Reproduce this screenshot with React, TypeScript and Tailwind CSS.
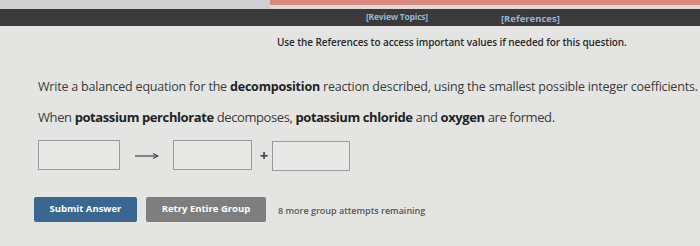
import React from "react";

export default function App() {
  return (
    <div
      className="w-[700px] h-[246px] bg-[#e4e5e2] overflow-hidden relative"
      style={{ fontFamily: '"Open Sans", sans-serif' }}
    >
      {/* top strip */}
      <div className="h-[9px] flex bg-[#dcdcda]">
        <div className="w-[270px] bg-[#cfd0d0]" />
        <div className="flex-1 flex flex-col">
          <div className="h-[5px] bg-[#d98a80]" />
          <div className="flex-1 bg-[#e2d8d6]" />
        </div>
      </div>
      {/* dark bar */}
      <div className="h-[17px] bg-[#3b393a] flex items-center font-bold text-[#8fb6d6] whitespace-nowrap">
        <div className="ml-[366px] text-[8.5px] tracking-[-0.2px]">[Review Topics]</div>
        <div className="ml-[73px] mt-[4px] text-[9.5px]">[References]</div>
      </div>
      <div className="pl-[277px] pt-[9px] text-[10px] font-semibold text-[#2a2a2a] tracking-[-0.1px] whitespace-nowrap">
        Use the References to access important values if needed for this question.
      </div>

      <div className="pl-[38px] pt-[28px] text-[12.5px] text-[#3a3a3a] tracking-[-0.2px] leading-[18px] whitespace-nowrap">
        Write a balanced equation for the <b className="font-bold text-[#222]">decomposition</b> reaction described, using the smallest possible integer coefficients.
      </div>
      <div className="pl-[38px] pt-[12px] text-[13px] text-[#3a3a3a] tracking-[-0.4px] leading-[18px] whitespace-nowrap">
        When <b className="font-bold text-[#222]">potassium perchlorate</b> decomposes, <b className="font-bold text-[#222]">potassium chloride</b> and <b className="font-bold text-[#222]">oxygen</b> are formed.
      </div>

      <div className="pl-[38px] pt-[12px] flex items-center">
        <div className="w-[82px] h-[30px] border border-[#9a9a9a] bg-[#e8e9e7]" />
        <svg width="26" height="8" viewBox="0 0 26 8" className="ml-[14px] mt-[3px]">
          <line x1="1" y1="4" x2="23" y2="4" stroke="#444" strokeWidth="1.2" />
          <path d="M19 1.5 L24 4 L19 6.5" fill="none" stroke="#444" strokeWidth="1.1" />
        </svg>
        <div className="ml-[13px] w-[79px] h-[30px] border border-[#9a9a9a] bg-[#e8e9e7] mt-[1px]" />
        <div className="ml-[4px] w-[16px] text-center text-[15px] leading-[15px] font-bold text-[#444] mt-[2px]">+</div>
        <div className="ml-[0px] w-[78px] h-[30px] border border-[#9a9a9a] bg-[#e8e9e7] mt-[3px]" />
      </div>

      <div className="pl-[34px] pt-[26px] flex items-center">
        <div className="w-[103px] h-[25px] rounded-[2px] bg-[#3a6790] text-white text-[9.5px] font-bold flex items-center justify-center">
          Submit Answer
        </div>
        <div className="ml-[9px] w-[120px] h-[25px] rounded-[2px] bg-[#7d7e7d] text-white text-[9.5px] font-bold flex items-center justify-center">
          Retry Entire Group
        </div>
        <div className="ml-[12px] mt-[2px] text-[9px] font-semibold text-[#555]">8 more group attempts remaining</div>
      </div>
    </div>
  );
}
